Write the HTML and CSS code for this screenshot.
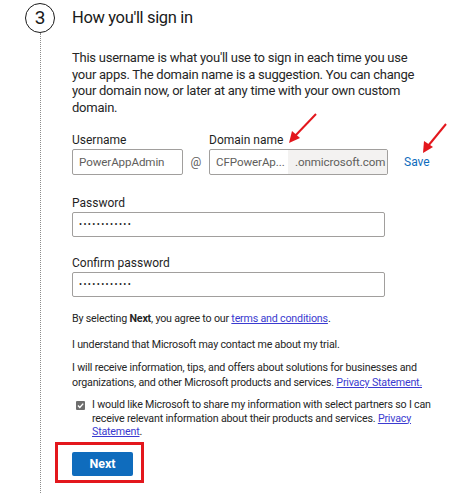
FILE: index.html
```html
<!DOCTYPE html>
<html lang="en">
<head>
  <meta charset="UTF-8">
  <title>How you'll sign in</title>
  <meta name="viewport" content="width=device-width, initial-scale=1.0">
  <link rel="stylesheet" href="styles.css">
</head>
<body>
  <div class="page">
    <div class="rail">
      <div class="step">3</div>
      <div class="rail-line"></div>
    </div>

    <div class="content">
      <h1>How you'll sign in</h1>
      <p class="intro">This username is what you'll use to sign in each time you use your apps. The domain name is a suggestion. You can change your domain now, or later at any time with your own custom domain.</p>

      <div class="name-row">
        <div class="field user-field">
          <label>Username</label>
          <div class="box">PowerAppAdmin</div>
        </div>
        <div class="at">@</div>
        <div class="field domain-field">
          <label>Domain name</label>
          <div class="box domain">
            <span class="domain-name">CFPowerAp...</span>
            <span class="suffix">.onmicrosoft.com</span>
          </div>
        </div>
        <a class="save" href="#">Save</a>
      </div>

      <label class="pw-label">Password</label>
      <div class="box pw">••••••••••••</div>

      <label class="pw-label confirm">Confirm password</label>
      <div class="box pw">••••••••••••</div>

      <p class="small first">By selecting <b>Next</b>, you agree to our <a href="#">terms and conditions</a>.</p>
      <p class="small second">I understand that Microsoft may contact me about my trial.</p>
      <p class="small third">I will receive information, tips, and offers about solutions for businesses and organizations, and other Microsoft products and services. <a href="#">Privacy Statement.</a></p>

      <div class="check-row">
        <span class="check">
          <svg width="9" height="9" viewBox="0 0 9 9"><path d="M2 4.6 L3.8 6.4 L7.2 2.6" fill="none" stroke="#fff" stroke-width="1.4"/></svg>
        </span>
        <p class="small">I would like Microsoft to share my information with select partners so I can receive relevant information about their products and services. <a href="#">Privacy Statement</a>.</p>
      </div>

      <div class="highlight">
        <button type="button" class="next">Next</button>
      </div>
    </div>

    <!-- annotation arrows -->
    <svg class="arrows" width="474" height="493" viewBox="0 0 474 493">
      <line x1="316" y1="114" x2="295" y2="136" stroke="#e3171d" stroke-width="2"/>
      <polygon points="289,143 292,131 300,138" fill="#e3171d"/>
      <line x1="446" y1="124" x2="428" y2="146" stroke="#e3171d" stroke-width="2"/>
      <polygon points="423,153 424,141 433,147" fill="#e3171d"/>
    </svg>
  </div>
</body>
</html>
```

FILE: styles.css
```css
body { margin: 0; background: #fff; font-family: Roboto, "Liberation Sans", sans-serif; color: #262626; }
.page { display: flex; min-height: 493px; position: relative; }

.rail { width: 72px; flex: none; display: flex; flex-direction: column; }
.step {
  width: 28px; height: 28px; margin: 3px 0 0 25px;
  border: 1.5px solid #1a1a1a; border-radius: 50%;
  font-size: 19px; line-height: 28px; text-align: center; color: #1a1a1a;
}
.rail-line { flex: 1; margin-left: 40px; border-left: 1px dotted #8c8c8c; }

.content { flex: 1; }
h1 { margin: 6px 0 0; font-size: 16.5px; letter-spacing: -0.35px; line-height: 24px; font-weight: 400; color: #1a1a1a; }
.intro { margin: 20px 0 0; width: 345px; font-size: 13px; letter-spacing: -0.25px; line-height: 16.5px; color: #262626; }

label { display: block; font-size: 12px; line-height: 18px; color: #1f1f1f; }
.box {
  box-sizing: border-box; height: 26px; border: 1px solid #a19f9d; border-radius: 2px;
  font-size: 11.6px; letter-spacing: -0.1px; line-height: 24px; padding: 0 6px; color: #605e5c; background: #fff;
}

.name-row { display: flex; align-items: flex-end; margin-top: 15px; }
.user-field { width: 111px; }
.at { width: 26px; text-align: center; font-size: 12px; line-height: 26px; color: #605e5c; }
.domain-field { width: 179px; }
.domain { display: flex; padding: 0; overflow: hidden; }
.domain-name { width: 78px; padding-left: 6px; box-sizing: border-box; white-space: nowrap; }
.suffix { flex: 1; background: #f3f2f1; padding-left: 7px; white-space: nowrap; }
.save { margin-left: 16px; font-size: 12px; line-height: 26px; color: #0f6cbd; text-decoration: none; }

.pw-label { margin-top: 19px; }
.pw-label.confirm { margin-top: 17px; }
.pw { width: 313px; height: 25px; color: #1a1a1a; font-size: 9px; letter-spacing: 1.4px; line-height: 23px; }

.small { margin: 0; font-size: 10.7px; letter-spacing: -0.2px; line-height: 15px; color: #262626; }
.small a { color: #3b3bd0; }
.small.first { margin-top: 14px; }
.small.second { margin-top: 11px; }
.small.third { margin-top: 8px; width: 350px; }

.check-row { display: flex; margin-top: 8px; width: 364px; }
.check-row .small { line-height: 13.5px; }
.check {
  flex: none; width: 9px; height: 9px; margin: 3px 7px 0 4px;
  background: #6e6e6e; border-radius: 1px; display: flex;
}

.highlight {
  display: inline-block; margin: 3px 0 0 -17px; padding: 7px 8px 4px 14px;
  border: 3px solid #e3171d;
}
.next {
  display: block; width: 61px; height: 24px; border: none; border-radius: 2px;
  background: #0f6cbd; color: #fff; font-family: inherit; font-size: 12.5px; font-weight: 700;
}

.arrows { position: absolute; left: 0; top: 0; pointer-events: none; }
```
